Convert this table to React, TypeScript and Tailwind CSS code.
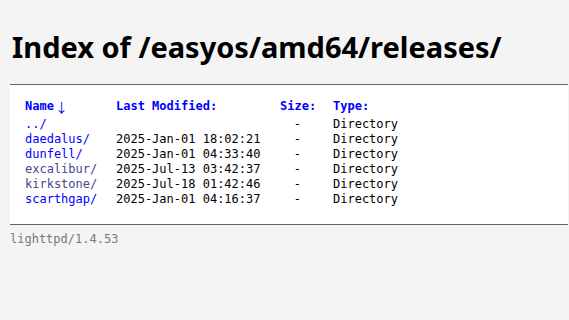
const rows = [
  { name: "../", date: "", visited: false },
  { name: "daedalus/", date: "2025-Jan-01 18:02:21", visited: false },
  { name: "dunfell/", date: "2025-Jan-01 04:33:40", visited: false },
  { name: "excalibur/", date: "2025-Jul-13 03:42:37", visited: true },
  { name: "kirkstone/", date: "2025-Jul-18 01:42:46", visited: true },
  { name: "scarthgap/", date: "2025-Jan-01 04:16:37", visited: false },
];

export default function App() {
  return (
    <div className="min-h-[320px] bg-[#f4f4f4] pl-[10px] pr-[1px] pt-[28px] text-black">
      <h2 className="pl-[2px] text-[29px] font-bold leading-[38px] font-['Noto_Sans',sans-serif]">
        Index of /easyos/amd64/releases/
      </h2>
      <div className="mt-[18px] border-y border-[#646464] bg-white pt-[14px] pb-[17px] pl-[15px] font-['DejaVu_Sans_Mono',monospace] text-[12px]">
        <div className="flex h-[18px] pb-[3px] font-bold leading-[15px] text-[#0000ff]">
          <span className="flex w-[91px]">
            Name
            <span className="ml-[1px] font-['Noto_Sans_CJK_JP',sans-serif] text-[13px] font-normal">↓</span>
          </span>
          <span className="w-[164px]">Last Modified:</span>
          <span className="w-[35px] text-right">Size:</span>
          <span className="ml-[18px]">Type:</span>
        </div>
        {rows.map((r) => (
          <div key={r.name} className="flex h-[15px] leading-[15px]">
            <span
              className={`w-[91px] ${r.visited ? "text-[#48468f]" : "text-[#0000ff]"}`}
            >
              {r.name}
            </span>
            <span className="w-[164px]">{r.date}</span>
            <span className="w-[21px] text-right">-</span>
            <span className="ml-[32px]">Directory</span>
          </div>
        ))}
      </div>
      <div className="pt-[7px] font-['DejaVu_Sans_Mono',monospace] text-[12px] leading-[15px] text-[#787878]">
        lighttpd/1.4.53
      </div>
    </div>
  );
}
